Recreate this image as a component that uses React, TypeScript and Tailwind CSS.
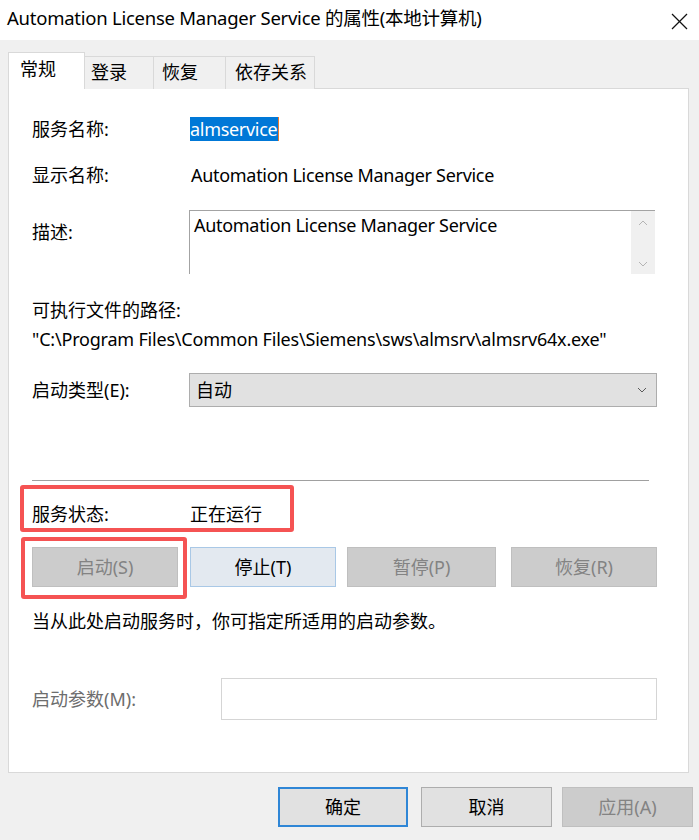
import React from "react";

const font = "font-['Noto_Sans','Noto_Sans_CJK_SC',sans-serif]";

function Chevron({ up = false, className = "" }: { up?: boolean; className?: string }) {
  return (
    <svg width="10" height="6" viewBox="0 0 10 6" className={className}>
      <polyline
        points={up ? "1,5 5,1 9,5" : "1,1 5,5 9,1"}
        fill="none"
        stroke="currentColor"
        strokeWidth="1"
      />
    </svg>
  );
}

function Btn({
  label,
  w,
  variant,
  className = "",
}: {
  label: string;
  w: string;
  variant: "disabled" | "focus" | "normal" | "default";
  className?: string;
}) {
  const styles = {
    disabled: "bg-[#cccccc] border border-[#bfbfbf] text-[#838383]",
    focus: "bg-[#e3e9f0] border border-[#a9c8e6] text-black",
    normal: "bg-[#e1e1e1] border border-[#adadad] text-black",
    default: "bg-[#e1e1e1] border-2 border-[#2f86d6] text-black",
  }[variant];
  return (
    <div className={`${w} h-[40px] flex items-center justify-center text-[18px] ${styles} ${className}`}>
      {label}
    </div>
  );
}

export default function App() {
  return (
    <div className={`${font} w-[699px] h-[840px] bg-[#f0f0f0] relative overflow-hidden text-black`}>
      {/* title bar */}
      <div className="h-[40px] bg-white flex items-center justify-between pl-[7px] pr-[11px]">
        <span className="text-[18.5px] leading-[24px] tracking-[-0.25px] -mt-[4px]">
          Automation License Manager Service 的属性(本地计算机)
        </span>
        <svg width="17" height="17" viewBox="0 0 17 17" className="mt-[2px]">
          <line x1="1" y1="1" x2="16" y2="16" stroke="#111" strokeWidth="1.2" />
          <line x1="16" y1="1" x2="1" y2="16" stroke="#111" strokeWidth="1.2" />
        </svg>
      </div>

      {/* tabs */}
      <div className="flex items-end pl-[8px] pt-[12px] h-[49px] relative z-10">
        <div className="w-[77px] h-[37px] bg-white border border-b-0 border-[#d9d9d9] pl-[11px] pt-[4px] text-[18px] leading-[24px]">
          常规
        </div>
        <div className="w-[69px] h-[33px] bg-[#f0f0f0] border border-l-0 border-b-0 border-[#d9d9d9] pl-[6px] pt-[3px] text-[18px] leading-[24px]">
          登录
        </div>
        <div className="w-[72px] h-[33px] bg-[#f0f0f0] border border-l-0 border-b-0 border-[#d9d9d9] pl-[8px] pt-[3px] text-[18px] leading-[24px]">
          恢复
        </div>
        <div className="w-[89px] h-[33px] bg-[#f0f0f0] border border-l-0 border-b-0 border-[#d9d9d9] pl-[9px] pt-[3px] text-[18px] leading-[24px]">
          依存关系
        </div>
      </div>

      {/* general page */}
      <div className="ml-[8px] w-[681px] h-[685px] -mt-[1px] bg-white border border-[#d9d9d9] pl-[23px] text-[18px] leading-[24px]">
        <div className="flex h-[24px] mt-[28px]">
          <div className="w-[158px]">服务名称:</div>
          <div className="relative">
            <span className="bg-[#0078d7] text-white inline-block h-[24px] pr-[1px] tracking-[-0.3px]">almservice</span>
            <span className="absolute right-[-1px] top-0 w-[1px] h-[24px] bg-[#e87a30]" />
          </div>
        </div>

        <div className="flex h-[24px] mt-[22px]">
          <div className="w-[158px]">显示名称:</div>
          <div className="pl-[1px] tracking-[-0.3px]">Automation License Manager Service</div>
        </div>

        <div className="flex items-start mt-[23px]">
          <div className="w-[157px] mt-[10px]">描述:</div>
          <div className="w-[466px] h-[64px] border-t border-l border-[#a3a3a3] flex">
            <div className="flex-1 pl-[4px] pt-[2px] tracking-[-0.3px]">Automation License Manager Service</div>
            <div className="w-[24px] bg-[#f0f0f0] flex flex-col items-center justify-between pt-[9px] pb-[7px] text-[#b4b4b4]">
              <Chevron up />
              <Chevron />
            </div>
          </div>
        </div>

        <div className="h-[24px] mt-[24px]">可执行文件的路径:</div>
        <div className="h-[24px] mt-[5px] tracking-[-0.2px]">
          "C:\Program Files\Common Files\Siemens\sws\almsrv\almsrv64x.exe"
        </div>

        <div className="flex items-center mt-[22px]">
          <div className="w-[157px]">启动类型(E):</div>
          <div className="w-[468px] h-[34px] bg-[#e1e1e1] border border-[#adadad] flex items-center justify-between pl-[6px] pr-[9px]">
            <span>自动</span>
            <Chevron className="text-[#5a5a5a]" />
          </div>
        </div>

        <div className="w-[617px] h-[1px] bg-[#a0a0a0] mt-[73px]" />

        <div className="flex h-[24px] mt-[21px]">
          <div className="w-[158px]">服务状态:</div>
          <div>正在运行</div>
        </div>

        <div className="flex mt-[21px]">
          <Btn label="启动(S)" w="w-[146px]" variant="disabled" />
          <Btn label="停止(T)" w="w-[146px]" variant="focus" className="ml-[12px]" />
          <Btn label="暂停(P)" w="w-[149px]" variant="disabled" className="ml-[11px]" />
          <Btn label="恢复(R)" w="w-[146px]" variant="disabled" className="ml-[15px]" />
        </div>

        <div className="h-[24px] mt-[22px]">当从此处启动服务时，你可指定所适用的启动参数。</div>

        <div className="flex items-center mt-[45px]">
          <div className="w-[189px] text-[#6d6d6d]">启动参数(M):</div>
          <div className="w-[436px] h-[42px] bg-white border border-[#d5d5d5]" />
        </div>
      </div>

      {/* dialog buttons */}
      <div className="flex pl-[278px] mt-[14px]">
        <Btn label="确定" w="w-[130px]" variant="default" />
        <Btn label="取消" w="w-[131px]" variant="normal" className="ml-[13px]" />
        <Btn label="应用(A)" w="w-[131px]" variant="disabled" className="ml-[10px]" />
      </div>

      {/* red annotation frames */}
      <div className="absolute left-[20px] top-[485px] w-[274px] h-[47px] border-[4px] border-[#f55353] rounded-[3px]" />
      <div className="absolute left-[21px] top-[537px] w-[166px] h-[62px] border-[4px] border-[#f55353] rounded-[3px]" />
    </div>
  );
}
